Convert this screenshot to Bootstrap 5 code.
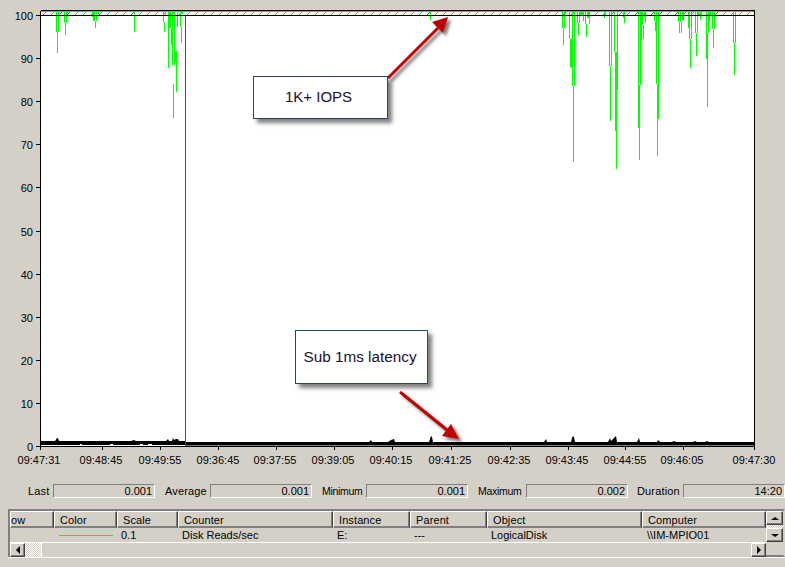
<!DOCTYPE html>
<html lang="en">
<head>
<meta charset="utf-8">
<title>Performance Monitor</title>
<link rel="stylesheet" href="https://cdn.jsdelivr.net/npm/bootstrap@5.3.0/dist/css/bootstrap.min.css">
<style>
html,body{margin:0;height:567px;overflow:hidden;background:#d4d0c8}
.pm-page{width:785px;height:567px;position:relative;overflow:hidden;font:11px/14px "Liberation Sans",Arial,sans-serif;color:#000;background:#d4d0c8}
.pm-chart{display:block;width:785px;height:484px}
.pm-chart text{font:11px "Liberation Sans",Arial,sans-serif;fill:#000}
.pm-stats{height:14px;padding-left:28px;margin-bottom:11px;white-space:nowrap}
.pm-lab{flex:none;margin-right:5px;letter-spacing:.15px}
.w1{width:20px}.w2{width:40px}.w3{width:39px}.w4{width:43px}.w5{width:41px}
.w3,.w4{font-size:10.5px;letter-spacing:-.3px}
.pm-val{flex:none;width:102px;height:14px;margin-right:10px;padding-right:2px;text-align:right;line-height:13px;border:1px solid;border-color:#808080 #fff #fff #808080}
.pm-val.short{margin-right:9px}
.pm-grid{width:777px;height:48px;margin-left:8px;border:2px solid;border-color:#808080 #d4d0c8 #808080 #808080;box-shadow:0 1px 0 #fff;position:relative}
.pm-cell{flex:none;padding-left:4px;overflow:hidden;white-space:nowrap}
.c0{width:44px}.c1{width:63px}.c2{width:61px}.c3{width:155px}.c4{width:77px}.c5{width:77px}.c6{width:155px}.c7{width:124px}
.pm-head{height:17px}
.pm-head .pm-cell{height:17px;line-height:17px;padding-left:5px;letter-spacing:.1px;border:1px solid;border-color:#fff #404040 #808080 #fff;box-shadow:inset -1px -1px 0 #808080}
.pm-head .c0{padding-left:0}
.pm-body{height:14px;width:756px}
.pm-body .pm-cell{height:14px;line-height:15px}
.pm-body .c7{padding-left:5px}
.pm-swatch{display:block;width:54px;height:1px;margin:7px 0 0 1px;background:#0f0}
.pm-hbar{width:756px;height:15px;border-top:1px solid #fff;background:#d4d0c8}
.pm-sbtn{flex:none;width:15px;height:14px;background:#d4d0c8;border:1px solid;border-color:#fff #404040 #404040 #fff;box-shadow:inset -1px -1px 0 #808080}
.pm-tri{width:0;height:0;border-style:solid;border-color:transparent}
.tl{border-width:4px 4px 4px 0;border-right-color:#000}
.tr{border-width:4px 0 4px 4px;border-left-color:#000}
.tu{border-width:0 4px 3px;border-bottom-color:#000}
.td{border-width:3px 4px 0;border-top-color:#000}
.pm-thumb{flex:none;width:16px;height:14px;background-image:repeating-conic-gradient(#fff 0 25%,#d4d0c8 0 50%);background-size:2px 2px}
.pm-track{flex:1 1 auto;border-left:1px solid #fff}
.pm-vbar{position:absolute;left:756px;top:0;width:17px;height:31px;background-image:repeating-conic-gradient(#fff 0 25%,#d4d0c8 0 50%);background-size:2px 2px}
.pm-vbar .pm-sbtn{width:17px;height:14px}
.pm-vbar .pm-sbtn+.pm-sbtn{margin-top:3px}
.pm-note{position:absolute;background:#fff;border:1px solid #1f497d;box-shadow:4px 4px 4px rgba(60,60,60,.65);font:15px/1 "Liberation Sans",Arial,sans-serif;color:#1a1030}
.n1{left:253px;top:76px;width:135px;height:43px;padding:0 4px 2px 0}
.n2{left:295px;top:330px;width:133px;height:54px;font-size:15.3px;padding:0 3px 1px 0}
.pm-pointers{position:absolute;left:0;top:0;width:785px;height:484px;pointer-events:none}
</style>
</head>
<body>
<main class="pm-page d-flex flex-column">
<svg class="pm-chart" viewBox="0 0 785 484" xmlns="http://www.w3.org/2000/svg">
<defs>
<pattern id="hatch" width="8" height="3" patternUnits="userSpaceOnUse" x="2" y="12">
<path d="M1 3L2 2L3 1L4 0" stroke="#777" stroke-width="1" fill="none" shape-rendering="crispEdges"/>
</pattern>
</defs>
<rect x="41" y="11" width="713" height="435" fill="#fff"/>
<rect x="41" y="12" width="713" height="3" fill="url(#hatch)"/>
<path shape-rendering="crispEdges" fill="none" stroke="#0f0" d="M41 11.5H754
M56.5 11V32M57.5 32V53M58.5 11V32M64.5 11V23M65.5 23V35M66.5 11V23M67.5 11V13
M92.5 11V17M93.5 11V21M94.5 11V21M95.5 21V28M96.5 11V21M98.5 11V14M134.5 11V32
M163.5 11V22M164.5 22V32M165.5 11V15M168.5 11V68M169.5 11V28M170.5 11V28M171.5 28V45M172.5 11V65M173.5 84V118M174.5 11V65M175.5 52V61M176.5 51V92M177.5 11V27M180.5 11V27M181.5 27V43M182.5 11V14M430.5 11V20
M562.5 11V28M563.5 28V45M564.5 11V28M569.5 11V39M570.5 39V67M571.5 39V68M572.5 11V86M573.5 86V162M574.5 11V86M577.5 11V23M578.5 23V35M579.5 11V23M580.5 11V16M581.5 11V15M582.5 11V16M583.5 11V21M585.5 11V24M586.5 24V37M587.5 11V18M588.5 11V18M589.5 11V24
M604.5 11V18M605.5 11V15M609.5 11V66M610.5 66V121M611.5 11V66M614.5 11V52M615.5 52V131M616.5 52V169M617.5 11V90M623.5 11V18M624.5 11V23
M638.5 11V128M639.5 85V160M640.5 11V85M641.5 11V40M642.5 11V25M643.5 25V39M644.5 11V17M645.5 11V23
M654.5 11V21M655.5 21V31M656.5 11V84M657.5 84V156M658.5 11V119
M678.5 11V22M679.5 22V33M680.5 11V22M681.5 22V33M682.5 11V20M683.5 11V20
M688.5 11V28M689.5 11V39M690.5 39V68M691.5 11V39M695.5 11V33M696.5 33V56M697.5 11V33M698.5 11V16M700.5 11V20M701.5 11V16
M706.5 11V59M707.5 33V107M708.5 11V33M709.5 11V22M710.5 11V16M712.5 11V29M713.5 29V48M714.5 11V29
M733.5 11V43M734.5 43V75M735.5 11V43"/>
<rect x="41" y="441" width="144" height="4" fill="#000"/>
<rect x="186" y="442" width="568" height="3.5" fill="#000"/>
<path fill="#000" d="M55 441L57 438L58 438L59 441ZM131 441L134 440L136 441ZM166 441L168 439L169 441ZM172 441L173 438L174 440L176 439L178 439L179 441Z
M369 442L371 440L372 442ZM388 442L391 440L394 439L395 442ZM429 442L431 436L432 437L433 442ZM544 442L546 439L547 442ZM571 442L572 438L573 436L574 437L575 442ZM608 442L610 438L611 441L614 438L616 436L617 442ZM637 442L639 438L640 442ZM657 442L658 440L660 442ZM672 442L674 441L676 442ZM693 442L695 441L697 442ZM705 442L707 441L709 442Z"/>
<path shape-rendering="crispEdges" fill="none" stroke="#fff" d="M80 444.5H82M110 444.5H113M140 444.5H143M148 444.5H152"/>
<path shape-rendering="crispEdges" fill="none" stroke="#f00" d="M185.5 15V446"/>
<path shape-rendering="crispEdges" fill="none" stroke="#000" stroke-width="1" d="M40.5 10.5H754.5V449M40.5 10.5V446.5H754.5M40 15.5H754.5
M36 15.5H40M36 58.5H40M36 101.5H40M36 144.5H40M36 187.5H40M36 231.5H40M36 274.5H40M36 317.5H40M36 360.5H40M36 403.5H40M36 446.5H40
M40.5 446V450M102.5 446V450M160.5 446V450M218.5 446V450M276.5 446V450M334.5 446V450M392.5 446V450M451.5 446V450M510.5 446V450M568.5 446V450M625.5 446V450M683.5 446V450M754.5 446V450"/>
<g text-anchor="end">
<text x="33" y="20">100</text><text x="33" y="63">90</text><text x="33" y="106">80</text><text x="33" y="149">70</text><text x="33" y="192">60</text><text x="33" y="236">50</text><text x="33" y="279">40</text><text x="33" y="322">30</text><text x="33" y="365">20</text><text x="33" y="408">10</text><text x="33" y="451">0</text>
</g>
<g text-anchor="middle">
<text x="39" y="464">09:47:31</text><text x="101" y="464">09:48:45</text><text x="160" y="464">09:49:55</text><text x="218" y="464">09:36:45</text><text x="275" y="464">09:37:55</text><text x="333" y="464">09:39:05</text><text x="391" y="464">09:40:15</text><text x="450" y="464">09:41:25</text><text x="509" y="464">09:42:35</text><text x="567" y="464">09:43:45</text><text x="625" y="464">09:44:55</text><text x="682" y="464">09:46:05</text><text x="754" y="464">09:47:30</text>
</g>
</svg>

<div class="pm-stats d-flex align-items-center">
<span class="pm-lab w1">Last</span><span class="pm-val">0.001</span>
<span class="pm-lab w2">Average</span><span class="pm-val">0.001</span>
<span class="pm-lab w3">Minimum</span><span class="pm-val">0.001</span>
<span class="pm-lab w4">Maximum</span><span class="pm-val short">0.002</span>
<span class="pm-lab w5">Duration</span><span class="pm-val">14:20</span>
</div>

<section class="pm-grid">
<div class="pm-head d-flex">
<div class="pm-cell c0">ow</div><div class="pm-cell c1">Color</div><div class="pm-cell c2">Scale</div><div class="pm-cell c3">Counter</div><div class="pm-cell c4">Instance</div><div class="pm-cell c5">Parent</div><div class="pm-cell c6">Object</div><div class="pm-cell c7">Computer</div>
</div>
<div class="pm-body d-flex">
<div class="pm-cell c0"></div><div class="pm-cell c1"><span class="pm-swatch"></span></div><div class="pm-cell c2">0.1</div><div class="pm-cell c3">Disk Reads/sec</div><div class="pm-cell c4">E:</div><div class="pm-cell c5">---</div><div class="pm-cell c6">LogicalDisk</div><div class="pm-cell c7">\\IM-MPIO01</div>
</div>
<div class="pm-hbar d-flex">
<div class="pm-sbtn d-flex align-items-center justify-content-center"><span class="pm-tri tl"></span></div><div class="pm-thumb"></div><div class="pm-track"></div><div class="pm-sbtn d-flex align-items-center justify-content-center"><span class="pm-tri tr"></span></div>
</div>
<div class="pm-vbar">
<div class="pm-sbtn d-flex align-items-center justify-content-center"><span class="pm-tri tu"></span></div><div class="pm-sbtn d-flex align-items-center justify-content-center"><span class="pm-tri td"></span></div>
</div>
</section>

<div class="pm-note n1 d-flex align-items-center justify-content-center">1K+ IOPS</div>
<div class="pm-note n2 d-flex align-items-center justify-content-center">Sub 1ms latency</div>
<svg class="pm-pointers" viewBox="0 0 785 484" xmlns="http://www.w3.org/2000/svg">
<defs><filter id="sh" x="-30%" y="-30%" width="170%" height="170%"><feDropShadow dx="3" dy="3" stdDeviation="1.6" flood-color="#333" flood-opacity=".65"/></filter></defs>
<g filter="url(#sh)" fill="#c00000" stroke="none">
<path d="M388 78L438 28" stroke="#c00000" stroke-width="3" fill="none"/>
<path d="M448 17L443 33L432 22Z"/>
<path d="M400 392L447 430" stroke="#c00000" stroke-width="3" fill="none"/>
<path d="M459 439L442 436L451 424Z"/>
</g>
</svg>
</main>
<script src="https://cdn.jsdelivr.net/npm/bootstrap@5.3.0/dist/js/bootstrap.bundle.min.js"></script>
</body>
</html>
